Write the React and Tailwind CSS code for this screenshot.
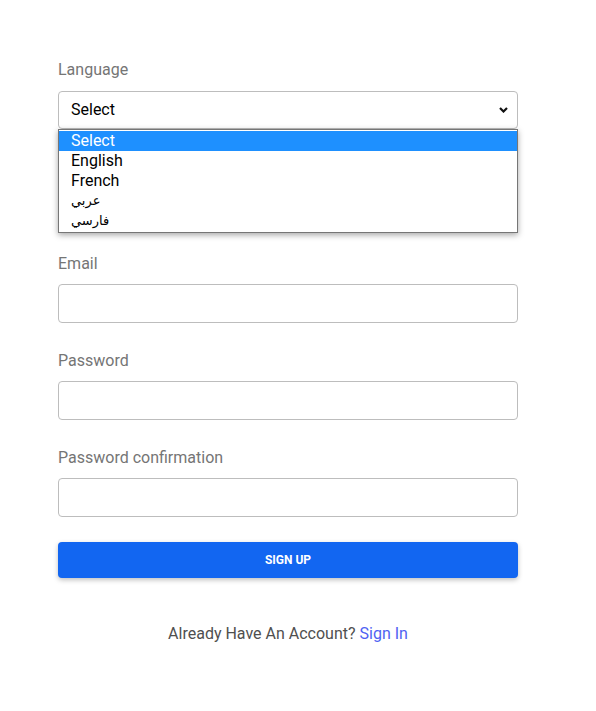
import { useState } from 'react';

const languages = [
  { value: 'Select', rtl: false },
  { value: 'English', rtl: false },
  { value: 'French', rtl: false },
  { value: 'عربي', rtl: true },
  { value: 'فارسي', rtl: true },
];

function Field({ label, type = 'text', hiddenLabel = false, last = false }) {
  return (
    <div className={last ? 'mb-[25px]' : 'mb-[26px]'}>
      <label
        className={
          hiddenLabel
            ? 'block h-6 leading-6 text-base text-[#757575] mb-2 invisible'
            : 'block h-6 leading-6 text-base text-[#757575] mb-2'
        }
      >
        {label}
      </label>
      <input
        type={type}
        className="block w-full h-[39px] px-3 rounded border border-[#bdbdbd] bg-white outline-none"
      />
    </div>
  );
}

function LanguageSelect() {
  const [open] = useState(true);
  const [value] = useState('Select');

  return (
    <div className="mb-[26px]">
      <label className="block h-6 leading-6 text-base text-[#757575] mb-[9px]">Language</label>
      <div className="relative">
        <div className="flex items-center justify-between h-[38px] pl-3 pr-[9px] rounded border border-[#bdbdbd] bg-white text-base text-black">
          <span>{value}</span>
          <svg width="9" height="6" viewBox="0 0 9 6" fill="none">
            <path d="M1 1 4.5 4.5 8 1" stroke="#111" strokeWidth="2.2" />
          </svg>
        </div>
        {open && (
          <ul className="absolute left-0 right-0 top-[38px] z-10 border border-[#767676] bg-white shadow-[0_2px_6px_rgba(0,0,0,0.35)] py-px">
            {languages.map((lang) => (
              <li
                key={lang.value}
                className={
                  lang.value === value
                    ? 'h-5 leading-5 pl-3 text-base bg-[#1e90ff] text-white'
                    : lang.rtl
                    ? "h-5 leading-5 pl-3 text-[13px] text-black font-['DejaVu_Sans',sans-serif]"
                    : 'h-5 leading-5 pl-3 text-base text-black'
                }
              >
                {lang.value}
              </li>
            ))}
          </ul>
        )}
      </div>
    </div>
  );
}

export default function App() {
  return (
    <div className="min-h-screen bg-white font-['Roboto','Noto_Sans',sans-serif]">
      <form className="ml-[58px] w-[460px] pt-[58px]" onSubmit={(e) => e.preventDefault()}>
        <LanguageSelect />
        <Field label="Name" hiddenLabel />
        <Field label="Email" type="email" />
        <Field label="Password" type="password" />
        <Field label="Password confirmation" type="password" last />
        <button
          type="submit"
          className="w-full h-9 rounded bg-[#1266f1] text-white text-xs font-bold uppercase shadow-[0_2px_5px_rgba(0,0,0,0.25)]"
        >
          Sign Up
        </button>
        <p className="mt-11 h-6 leading-6 text-center text-base text-[#4f4f4f]">
          Already Have An Account? <a href="#" className="text-[#4f62f2]">Sign In</a>
        </p>
      </form>
    </div>
  );
}
